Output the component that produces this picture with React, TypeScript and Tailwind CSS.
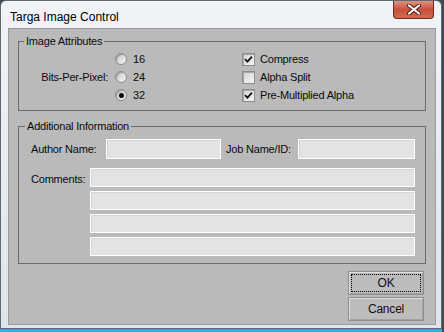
import React from 'react';

const font = { fontFamily: '"Liberation Sans", Arial, sans-serif' };

function Radio({ label, checked }: { label: string; checked?: boolean }) {
  return (
    <div className="flex h-[18px] items-center gap-[6px]">
      <div className="flex h-[12px] w-[12px] items-center justify-center rounded-full border border-[#8c8c8c] bg-gradient-to-br from-[#c4c4c4] to-[#f7f7f7] shadow-[inset_1px_1px_1px_rgba(0,0,0,0.25)]">
        {checked && <div className="h-[5px] w-[5px] rounded-full bg-black" />}
      </div>
      <span>{label}</span>
    </div>
  );
}

function Checkbox({ label, checked }: { label: string; checked?: boolean }) {
  return (
    <div className="flex h-[18px] items-center gap-[5px]">
      <div className="flex h-[13px] w-[13px] items-center justify-center border border-[#8c8c8c] bg-gradient-to-br from-[#d2d2d2] to-[#f6f6f6] shadow-[inset_1px_1px_0_#a8a8a8]">
        {checked && (
          <svg width="9" height="9" viewBox="0 0 9 9">
            <path d="M1 4.2 L3.4 6.6 L8 1.6" fill="none" stroke="#111" strokeWidth="1.8" />
          </svg>
        )}
      </div>
      <span>{label}</span>
    </div>
  );
}

function Field({ className }: { className: string }) {
  return <div className={`border border-white bg-[#e3e3e3] shadow-[inset_1px_1px_0_#d6d6d6] ${className}`} />;
}

function Button({ label, focused }: { label: string; focused?: boolean }) {
  return (
    <div className="flex h-[24px] w-[76px] items-center justify-center border border-[#8e8e8e] bg-[#bcbcbc] p-[2px] shadow-[inset_1px_1px_0_#dedede,inset_-1px_-1px_0_#a4a4a4]">
      <div
        className={`flex h-full w-full items-center justify-center text-[12px] text-[#111] ${
          focused ? 'border border-dotted border-black' : 'border border-transparent'
        }`}
      >
        {label}
      </div>
    </div>
  );
}

export default function App() {
  return (
    <div className="h-[332px] w-[444px] bg-[#3f4a52]" style={font}>
      <div className="flex h-[329px] w-[442px] flex-col rounded-t-[6px] border border-[#5d6a75] bg-gradient-to-b from-[#f1f4f7] to-[#dfe5ea]">
        {/* Title bar */}
        <div className="flex h-[27px] items-start justify-between">
          <div className="pl-[9px] pt-[7px] text-[12px] text-black">Targa Image Control</div>
          <div className="mr-[7px] flex h-[18px] w-[41px] items-center justify-center rounded-b-[4px] border border-t-0 border-[#6b2b20] bg-gradient-to-b from-[#e0917f] via-[#c8503b] to-[#d06a50]">
            <svg width="14" height="11" viewBox="0 0 14 11">
              <path d="M2 1.5 L12 9.5 M12 1.5 L2 9.5" stroke="#4a1a12" strokeWidth="4" strokeLinecap="round" />
              <path d="M2 1.5 L12 9.5 M12 1.5 L2 9.5" stroke="#ffffff" strokeWidth="2.2" strokeLinecap="round" />
            </svg>
          </div>
        </div>

        {/* Client area */}
        <div className="ml-[7px] mr-[5px] flex h-[297px] flex-col border border-[#9a9a9a] bg-[#bababa] pl-[9px] pt-[5px] text-[11px] tracking-[-0.2px] text-[#0a0a0a]">
          <fieldset className="h-[77px] w-[408px] border border-[#6c6c6c]">
            <legend className="ml-[5px] px-[2px] leading-[14px]">Image Attributes</legend>
            <div className="flex pt-[2px]">
              <div className="flex w-[96px] items-center justify-end pr-[7px]">Bits-Per-Pixel:</div>
              <div className="flex w-[127px] flex-col">
                <Radio label="16" />
                <Radio label="24" />
                <Radio label="32" checked />
              </div>
              <div className="flex flex-col">
                <Checkbox label="Compress" checked />
                <Checkbox label="Alpha Split" />
                <Checkbox label="Pre-Multiplied Alpha" checked />
              </div>
            </div>
          </fieldset>

          <fieldset className="mt-[8px] h-[145px] w-[408px] border border-[#6c6c6c]">
            <legend className="ml-[6px] px-[2px] leading-[14px]">Additional Information</legend>
            <div className="flex flex-col pl-[12px] pt-[6px]">
              <div className="flex h-[20px] items-center">
                <div className="w-[75px]">Author Name:</div>
                <Field className="h-[20px] w-[115px]" />
                <div className="w-[77px] pl-[5px]">Job Name/ID:</div>
                <Field className="h-[20px] w-[117px]" />
              </div>
              <div className="mt-[9px] flex">
                <div className="w-[59px] pt-[3px]">Comments:</div>
                <div className="flex flex-col gap-[4px]">
                  <Field className="h-[19px] w-[325px]" />
                  <Field className="h-[19px] w-[325px]" />
                  <Field className="h-[19px] w-[325px]" />
                  <Field className="h-[19px] w-[325px]" />
                </div>
              </div>
            </div>
          </fieldset>

          <div className="mt-[7px] flex w-[406px] flex-col items-end gap-[2px]">
            <Button label="OK" focused />
            <Button label="Cancel" />
          </div>
        </div>
      </div>
      <div className="h-[3px] w-[442px] bg-[#2ab4e6]" />
    </div>
  );
}
